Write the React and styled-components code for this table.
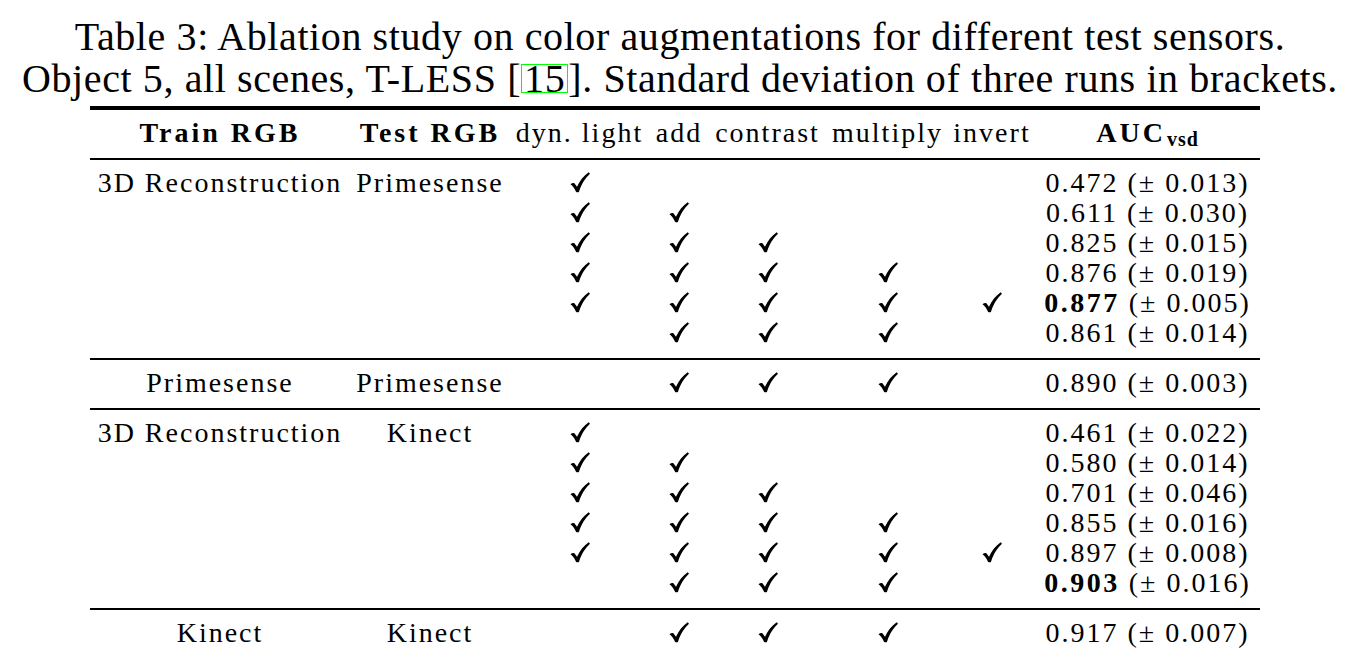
import React from 'react';
import styled, { createGlobalStyle } from 'styled-components';

const GlobalStyle = createGlobalStyle`
  body {
    margin: 0;
    background: #fff;
    color: #000;
    font-family: "Liberation Serif", "Times New Roman", serif;
  }
`;

const Page = styled.div`
  width: 1360px;
  height: 670px;
  overflow: hidden;
  background: #fff;
`;

const Caption = styled.div`
  padding-top: 16px;
  font-size: 40px;
  line-height: 42px;
  letter-spacing: 0.6px;
  text-align: center;
  white-space: nowrap;
`;

const CaptionLine = styled.div``;

const Cite = styled.span`
  display: inline-block;
  line-height: 27px;
  padding: 0 2px;
  border: 1.5px solid #00ff00;
`;

const Table = styled.div`
  width: 1170px;
  margin-left: 90px;
  font-size: 28px;
  letter-spacing: 2px;
`;

const Rule = styled.div`
  height: ${p => p.$thick}px;
  background: #000;
  margin-top: ${p => p.$top || 0}px;
`;

const Section = styled.div`
  padding: ${p => p.$pt}px 0 ${p => p.$pb}px;
`;

const Row = styled.div`
  display: grid;
  grid-template-columns: 260px 160px 139px 60px 117px 123px 86px 1fr;
  height: 30px;
  line-height: 30px;
  white-space: nowrap;
`;

const Cell = styled.div`
  display: flex;
  align-items: center;
  justify-content: center;
  font-weight: ${p => (p.$bold ? 700 : 400)};
  letter-spacing: ${p => (p.$bold ? 3 : 2)}px;
`;

const Sub = styled.span`
  font-size: 20px;
  font-weight: 700;
  letter-spacing: 1px;
  position: relative;
  top: 6px;
  margin-left: 1px;
`;

const Strong = styled.span`
  font-weight: 700;
  letter-spacing: 2.5px;
`;

const CheckMark = styled.svg`
  width: 20px;
  height: 21px;
  margin-top: -1px;
`;

const Check = () => (
  <CheckMark viewBox="0 0 20 21">
    <path
      d="M0.5 12.2 C2 10.9 3.6 10.5 4.6 11.4 L7 14.7 C9.8 8.7 13.6 3.7 18.7 0.2 L20 1.7 C15.3 6.1 11.7 11.5 9.1 19.4 C8.7 20.5 6.6 20.7 6 19.7 C4.6 16.7 3 14.1 0.5 12.2 Z"
      fill="#000"
    />
  </CheckMark>
);

const groups = [
  {
    train: '3D Reconstruction',
    test: 'Primesense',
    rows: [
      { c: [1, 0, 0, 0, 0], auc: '0.472', sd: '0.013' },
      { c: [1, 1, 0, 0, 0], auc: '0.611', sd: '0.030' },
      { c: [1, 1, 1, 0, 0], auc: '0.825', sd: '0.015' },
      { c: [1, 1, 1, 1, 0], auc: '0.876', sd: '0.019' },
      { c: [1, 1, 1, 1, 1], auc: '0.877', sd: '0.005', best: true },
      { c: [0, 1, 1, 1, 0], auc: '0.861', sd: '0.014' }
    ]
  },
  {
    train: 'Primesense',
    test: 'Primesense',
    rows: [{ c: [0, 1, 1, 1, 0], auc: '0.890', sd: '0.003' }]
  },
  {
    train: '3D Reconstruction',
    test: 'Kinect',
    rows: [
      { c: [1, 0, 0, 0, 0], auc: '0.461', sd: '0.022' },
      { c: [1, 1, 0, 0, 0], auc: '0.580', sd: '0.014' },
      { c: [1, 1, 1, 0, 0], auc: '0.701', sd: '0.046' },
      { c: [1, 1, 1, 1, 0], auc: '0.855', sd: '0.016' },
      { c: [1, 1, 1, 1, 1], auc: '0.897', sd: '0.008' },
      { c: [0, 1, 1, 1, 0], auc: '0.903', sd: '0.016', best: true }
    ]
  },
  {
    train: 'Kinect',
    test: 'Kinect',
    rows: [{ c: [0, 1, 1, 1, 0], auc: '0.917', sd: '0.007' }]
  }
];

export default function App() {
  return (
    <Page>
      <GlobalStyle />
      <Caption>
        <CaptionLine>
          Table 3: Ablation study on color augmentations for different test sensors.
        </CaptionLine>
        <CaptionLine>
          Object 5, all scenes, T-LESS [<Cite>15</Cite>]. Standard deviation of three runs in brackets.
        </CaptionLine>
      </Caption>
      <Table>
        <Rule $thick={4} $top={6} />
        <Section $pt={8} $pb={10}>
          <Row>
            <Cell $bold>Train RGB</Cell>
            <Cell $bold>Test RGB</Cell>
            <Cell>dyn. light</Cell>
            <Cell>add</Cell>
            <Cell>contrast</Cell>
            <Cell>multiply</Cell>
            <Cell>invert</Cell>
            <Cell $bold>
              AUC<Sub>vsd</Sub>
            </Cell>
          </Row>
        </Section>
        {groups.map((g, gi) => (
          <React.Fragment key={gi}>
            <Rule $thick={2} />
            <Section $pt={8} $pb={10}>
              {g.rows.map((r, ri) => (
                <Row key={ri}>
                  <Cell>{ri === 0 ? g.train : ''}</Cell>
                  <Cell>{ri === 0 ? g.test : ''}</Cell>
                  {r.c.map((on, ci) => (
                    <Cell key={ci}>{on ? <Check /> : null}</Cell>
                  ))}
                  <Cell>
                    {r.best ? <Strong>{r.auc}</Strong> : r.auc}&nbsp;(± {r.sd})
                  </Cell>
                </Row>
              ))}
            </Section>
          </React.Fragment>
        ))}
      </Table>
    </Page>
  );
}
